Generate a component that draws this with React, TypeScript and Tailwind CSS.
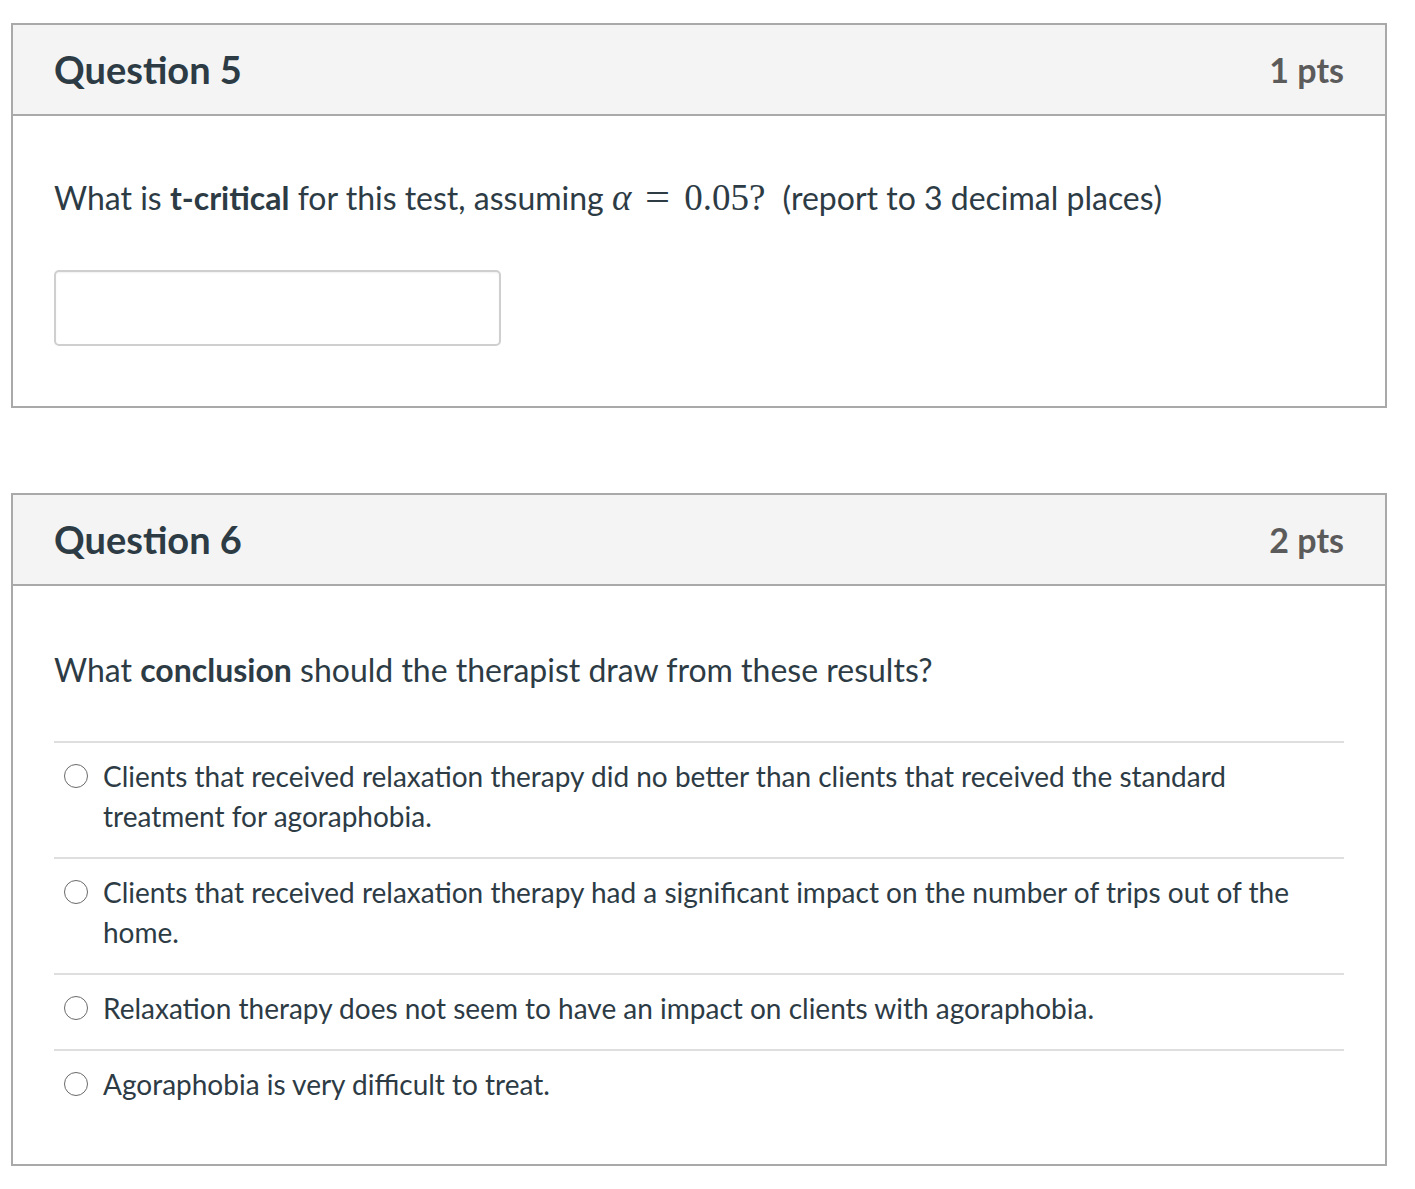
const answers = [
  "Clients that received relaxation therapy did no better than clients that received the standard treatment for agoraphobia.",
  "Clients that received relaxation therapy had a significant impact on the number of trips out of the home.",
  "Relaxation therapy does not seem to have an impact on clients with agoraphobia.",
  "Agoraphobia is very difficult to treat.",
];

function Header({ title, pts }: { title: string; pts: string }) {
  return (
    <div className="flex h-[91px] items-center justify-between border-b-2 border-[#a9a9a9] bg-[#f4f4f4] px-[41px]">
      <h2 className="text-[38px] font-bold text-[#2d3b45]">{title}</h2>
      <span className="text-[34px] font-bold text-[#5b5b5b]">{pts}</span>
    </div>
  );
}

function Radio() {
  return (
    <span className="mt-[8px] mr-[15px] inline-block h-[24px] w-[24px] shrink-0 rounded-full border-[1.5px] border-[#6a6a6a]" />
  );
}

export default function App() {
  return (
    <div
      className="min-h-screen bg-white pt-[23px] pl-[11px] text-[#2d3b45]"
      style={{ fontFamily: "Lato, 'Open Sans', sans-serif" }}
    >
      <section className="w-[1376px] border-2 border-[#a9a9a9]">
        <Header title="Question 5" pts="1 pts" />
        <div className="px-[41px] pt-[62px] pb-[60px]">
          <p className="text-[32px] leading-[40px]">
            What is <strong className="font-bold">t-critical</strong> for this test, assuming{" "}
            <span className="font-['Liberation_Serif',serif] text-[37px]">
              <span className="italic">α</span>
              <span className="mx-[16px] inline-block scale-x-[1.2]">=</span>
              <span>0.05?</span>
            </span>
            <span className="ml-[17px]">(report to 3 decimal places)</span>
          </p>
          <div className="mt-[52px] h-[76px] w-[447px] rounded-[5px] border-2 border-[#cfcfcf] shadow-[inset_0_1px_2px_rgba(0,0,0,0.06)]" />
        </div>
      </section>

      <section className="mt-[85px] w-[1376px] border-2 border-[#a9a9a9]">
        <Header title="Question 6" pts="2 pts" />
        <div className="px-[41px] pt-[64px] pb-[39px]">
          <p className="text-[32px] leading-[40px]">
            What <strong className="font-bold">conclusion</strong> should the therapist draw from these results?
          </p>
          <div className="mt-[51px]">
            {answers.map((a, i) => (
              <div key={i} className="flex border-t-2 border-[#dedede] pt-[13px] pb-[21px] pl-[10px] pr-[20px]">
                <Radio />
                <span className="text-[28px] leading-[40px]">{a}</span>
              </div>
            ))}
          </div>
        </div>
      </section>
    </div>
  );
}
